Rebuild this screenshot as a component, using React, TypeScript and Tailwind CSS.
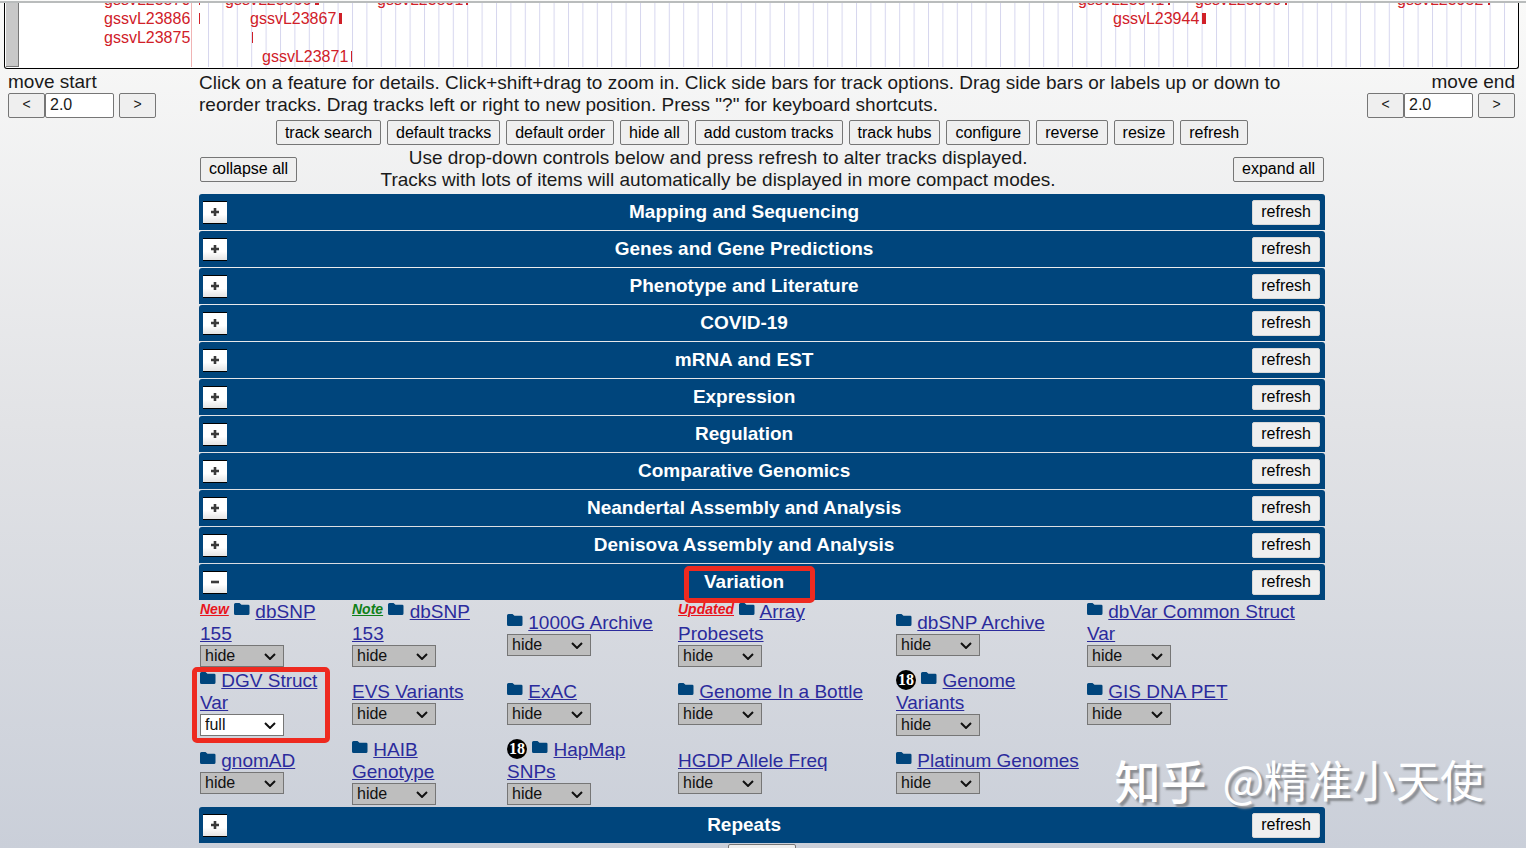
import { useState, type ReactNode } from 'react';

type Track = {
  name: string;
  flag?: { text: string; className: string };
  composite?: boolean;
  lifted?: boolean;
  visibility?: string;
  marked?: boolean;
};

const TOOLBAR = [
  'track search',
  'default tracks',
  'default order',
  'hide all',
  'add custom tracks',
  'track hubs',
  'configure',
  'reverse',
  'resize',
  'refresh',
];

const COLLAPSED_GROUPS = [
  'Mapping and Sequencing',
  'Genes and Gene Predictions',
  'Phenotype and Literature',
  'COVID-19',
  'mRNA and EST',
  'Expression',
  'Regulation',
  'Comparative Genomics',
  'Neandertal Assembly and Analysis',
  'Denisova Assembly and Analysis',
];

const VARIATION_TRACKS: Track[] = [
  { name: 'dbSNP 155', composite: true, flag: { text: 'New', className: 'text-[#e8141c]' } },
  { name: 'dbSNP 153', composite: true, flag: { text: 'Note', className: 'text-[#108018]' } },
  { name: '1000G Archive', composite: true },
  { name: 'Array Probesets', composite: true, flag: { text: 'Updated', className: 'text-[#e8141c]' } },
  { name: 'dbSNP Archive', composite: true },
  { name: 'dbVar Common Struct Var', composite: true },
  { name: 'DGV Struct Var', composite: true, visibility: 'full', marked: true },
  { name: 'EVS Variants' },
  { name: 'ExAC', composite: true },
  { name: 'Genome In a Bottle', composite: true },
  { name: 'Genome Variants', composite: true, lifted: true },
  { name: 'GIS DNA PET', composite: true },
  { name: 'gnomAD', composite: true },
  { name: 'HAIB Genotype', composite: true },
  { name: 'HapMap SNPs', composite: true, lifted: true },
  { name: 'HGDP Allele Freq' },
  { name: 'Platinum Genomes', composite: true },
];

// x is the left edge of the item label, tick the left edge of its bar
const ITEMS = [
  { name: 'gssvL23870', x: 99, y: 2, tick: 194, w: 1 },
  { name: 'gssvL23866', x: 220, y: 2, tick: 310, w: 4 },
  { name: 'gssvL23891', x: 372, y: 2, tick: 461, w: 2 },
  { name: 'gssvL23941', x: 1073, y: 2, tick: 1163, w: 2 },
  { name: 'gssvL23960', x: 1190, y: 2, tick: 1280, w: 2 },
  { name: 'gssvL23952', x: 1392, y: 2, tick: 1483, w: 2 },
  { name: 'gssvL23886', x: 99, y: 21, tick: 194, w: 1 },
  { name: 'gssvL23867', x: 245, y: 21, tick: 334, w: 3 },
  { name: 'gssvL23944', x: 1108, y: 21, tick: 1197, w: 4 },
  { name: 'gssvL23875', x: 99, y: 40, tick: 247, w: 1 },
  { name: 'gssvL23871', x: 257, y: 59, tick: 346, w: 1 },
];

function TrackImage() {
  return (
    <div className="mx-1 mr-[7px] overflow-hidden rounded-b-[3px] border-x border-b border-black bg-white">
      <svg className="block h-[65px] w-full" role="img" aria-label="Structural variant track">
        <defs>
          <pattern id="guides" x="203" y="0" width="14.4" height="64" patternUnits="userSpaceOnUse">
            <rect width="1" height="64" fill="#d6d6ee" />
          </pattern>
        </defs>
        <rect x="203" width="1298" height="64" fill="url(#guides)" />
        <rect x="1" width="13" height="63" fill="#c8c8c8" />
        <rect x="13" width="1" height="63" fill="#777" />
        <rect x="1" y="63" width="13" height="1" fill="#777" />
        <rect x="186" width="1" height="64" fill="#f0b4b4" />
        {ITEMS.map((item) => (
          <g key={item.name} fill="#d02028">
            <text x={item.x} y={item.y} fontSize="16">
              {item.name}
            </text>
            <rect x={item.tick} y={item.y - 11} width={item.w} height="11" />
          </g>
        ))}
      </svg>
    </div>
  );
}

function Button({ children, frameless }: { children: ReactNode; frameless?: boolean }) {
  return (
    <button
      type="button"
      className={`h-[25px] shrink-0 rounded-[2px] border bg-[#efefef] px-2 text-base leading-5 text-black hover:bg-[#e5e5e5] ${
        frameless ? 'border-[#d8d8d8]' : 'border-[#767676]'
      }`}
    >
      {children}
    </button>
  );
}

function MoveControl({ label, id, alignEnd }: { label: string; id: string; alignEnd?: boolean }) {
  const step = 'h-[25px] w-[37px] rounded-[2px] border border-[#767676] bg-[#efefef] pb-1 text-sm leading-5';
  return (
    <div className={`flex flex-col ${alignEnd ? 'items-end pr-[3px]' : 'items-start'}`}>
      <label htmlFor={id} className="leading-[22px]">
        {label}
      </label>
      <div className="flex">
        <button type="button" className={step} aria-label={`${label} left`}>
          &lt;
        </button>
        <input
          id={id}
          defaultValue="2.0"
          className="mr-[5px] h-[25px] w-[69px] rounded-[2px] border border-[#767676] bg-white px-1 pb-0.5 text-base leading-5"
        />
        <button type="button" className={step} aria-label={`${label} right`}>
          &gt;
        </button>
      </div>
    </div>
  );
}

function GroupHeader({ title, open, marked }: { title: string; open?: boolean; marked?: boolean }) {
  const [expanded, setExpanded] = useState(Boolean(open));
  return (
    <div className="flex h-9 items-center rounded-t-[3px] bg-[#00457c] pr-[5px] pl-1">
      <button
        type="button"
        aria-expanded={expanded}
        aria-label={title}
        onClick={() => setExpanded((v) => !v)}
        className="mr-[9px] flex h-[23px] w-6 items-center justify-center border-y border-black bg-linear-to-b from-white from-60% to-[#e4e4e4]"
      >
        <svg width="10" height="10" viewBox="0 0 10 10" aria-hidden="true">
          <path d={expanded ? 'M1 5h8' : 'M1 5h8M5 1v8'} stroke="#3a3a3a" strokeWidth="2.6" />
        </svg>
      </button>
      <h2 className="flex-1 text-center font-bold text-white">
        <span className="relative">
          {title}
          {marked && (
            <span
              aria-hidden="true"
              className="absolute -top-[5px] -right-[31px] -bottom-[11px] -left-5 z-10 rounded-[5px] border-[5px] border-[#ee2a20]"
            />
          )}
        </span>
      </h2>
      <Button frameless>refresh</Button>
    </div>
  );
}

function FolderIcon() {
  return (
    <svg className="inline-block h-3 w-4 align-[3px]" viewBox="0 0 16 12" aria-hidden="true">
      <path d="M0 1.5Q0 0 1.5 0H5.5L7.5 1.7H14.2Q15.5 1.7 15.5 3V10.5Q15.5 12 14 12H1.5Q0 12 0 10.5Z" fill="#00457c" />
    </svg>
  );
}

function TrackCell({ track }: { track: Track }) {
  const [visibility, setVisibility] = useState(track.visibility ?? 'hide');
  return (
    <div className="relative pr-1">
      <div className="leading-[22px]">
        {track.flag && (
          <>
            <a href="#" className={`align-[4px] text-sm leading-none font-bold italic underline ${track.flag.className}`}>
              {track.flag.text}
            </a>{' '}
          </>
        )}
        {track.lifted && (
          <>
            <span className="inline-flex h-5 w-5 items-center justify-center rounded-full bg-black align-[2px] font-['Liberation_Serif',serif] text-base leading-none font-bold text-white">
              18
            </span>{' '}
          </>
        )}
        {track.composite && (
          <>
            <FolderIcon />{' '}
          </>
        )}
        <a href="#" className="text-[#2b2b9c] underline">
          {track.name}
        </a>
      </div>
      <div className="relative w-[84px]">
        <select
          aria-label={track.name}
          value={visibility}
          onChange={(e) => setVisibility(e.target.value)}
          className={`block h-[22px] w-full appearance-none border border-[#767676] px-1 text-base leading-5 text-[#111] ${
            visibility === 'hide' ? 'bg-[#bebebe]' : 'bg-white'
          }`}
        >
          <option>hide</option>
          <option>dense</option>
          <option>squish</option>
          <option>pack</option>
          <option>full</option>
        </select>
        <svg
          className="pointer-events-none absolute top-2 right-2 h-[7px] w-3"
          viewBox="0 0 12 7"
          fill="none"
          aria-hidden="true"
        >
          <path d="M1 1l5 5 5-5" stroke="#111" strokeWidth="2" />
        </svg>
      </div>
      {track.marked && (
        <span
          aria-hidden="true"
          className="pointer-events-none absolute -top-[3px] right-[22px] -bottom-[7px] -left-2 rounded-[5px] border-[5px] border-[#ee2a20]"
        />
      )}
    </div>
  );
}

export default function App() {
  return (
    <div className="relative h-screen overflow-hidden bg-linear-to-b from-[#fafaf9] via-[#e2e3e6] to-[#cacfd9] font-['Liberation_Sans',Arial,sans-serif] text-[19px] leading-[22px] text-[#1a1a1a]">
      <div className="mt-px h-0.5 bg-[#b9bcbc]" />
      <TrackImage />
      <main className="grid grid-cols-[191px_minmax(0,1fr)_193px] px-2 pt-0.5">
        <MoveControl id="move-start" label="move start" />
        <div className="pt-px">
          <p>
            Click on a feature for details. Click+shift+drag to zoom in. Click side bars for track options. Drag side
            bars or labels up or down to reorder tracks. Drag tracks left or right to new position. Press "?" for
            keyboard shortcuts.
          </p>
          <div className="mt-1 flex justify-center gap-1.5">
            {TOOLBAR.map((text) => (
              <Button key={text}>{text}</Button>
            ))}
          </div>
          <div className="mt-0.5 mb-[3px] flex items-center px-px">
            <Button>collapse all</Button>
            <p className="flex-1 pr-[94px] text-center">
              Use drop-down controls below and press refresh to alter tracks displayed.
              <br />
              Tracks with lots of items will automatically be displayed in more compact modes.
            </p>
            <Button>expand all</Button>
          </div>
          <div className="flex flex-col gap-px">
            {COLLAPSED_GROUPS.map((title) => (
              <GroupHeader key={title} title={title} />
            ))}
            <GroupHeader title="Variation" open marked />
          </div>
          <div className="grid grid-cols-[152fr_155fr_171fr_218fr_191fr_238fr] items-center gap-y-[3px] pt-px pb-0.5 pl-px">
            {VARIATION_TRACKS.map((track) => (
              <TrackCell key={track.name} track={track} />
            ))}
          </div>
          <GroupHeader title="Repeats" />
          <div className="mt-px flex justify-center">
            <Button>refresh</Button>
          </div>
        </div>
        <MoveControl id="move-end" label="move end" alignEnd />
      </main>
      <div className="pointer-events-none absolute right-[42px] bottom-11 flex items-center gap-4 font-['Noto_Sans_CJK_SC',sans-serif] text-[44px] leading-[50px] text-white [text-shadow:3px_3px_2px_#8a8d92]">
        <span className="text-[46px] font-medium">知乎</span>
        <span>@精准小天使</span>
      </div>
    </div>
  );
}
